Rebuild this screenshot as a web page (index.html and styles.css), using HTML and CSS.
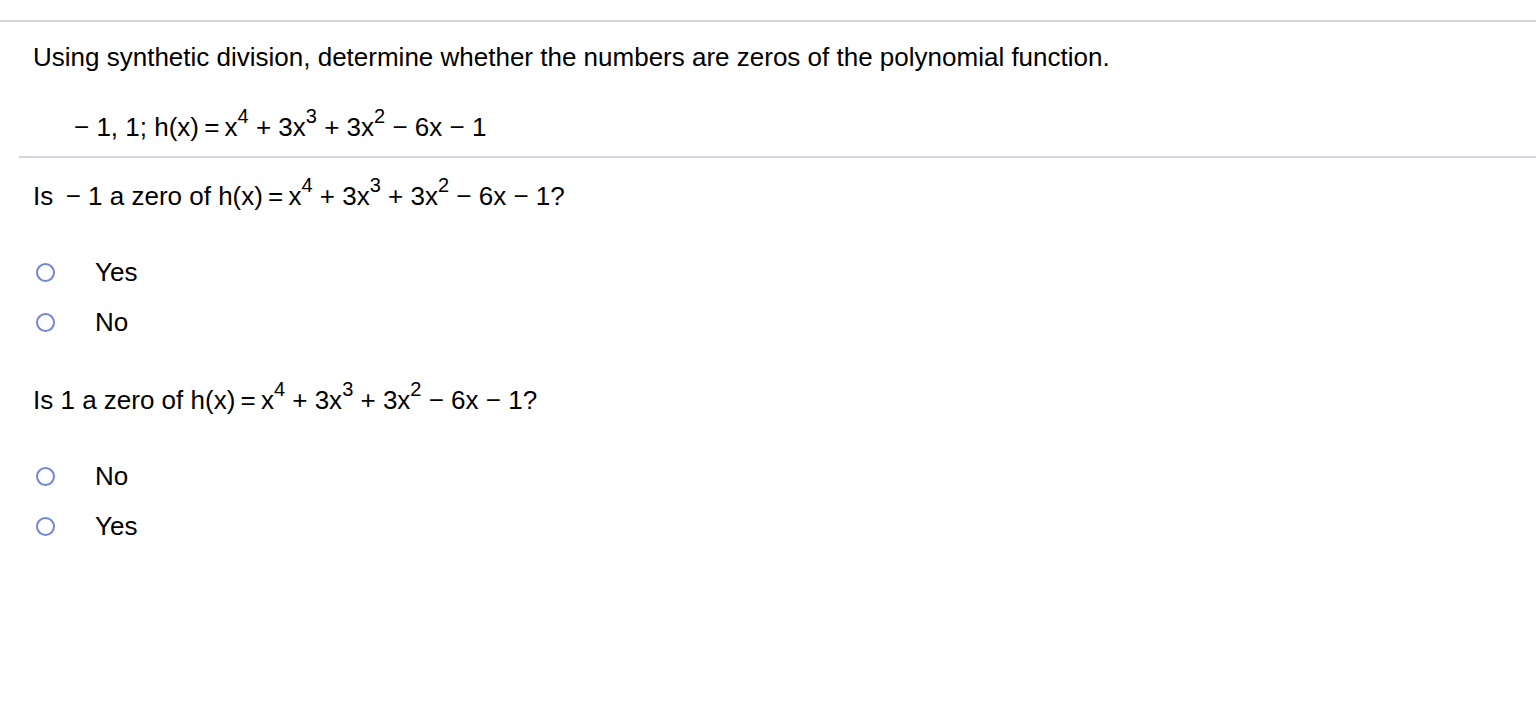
FILE: index.html
```html
<!DOCTYPE html>
<html>
<head>
<meta charset="utf-8">
<link rel="stylesheet" href="styles.css">
</head>
<body>
<div class="page">
  <div class="top-rule"></div>
  <section class="stem">
    <p class="prompt">Using synthetic division, determine whether the numbers are zeros of the polynomial function.</p>
    <p class="given">− 1, 1; h(x)&thinsp;=&thinsp;x<sup>4</sup> + 3x<sup>3</sup> + 3x<sup>2</sup> − 6x − 1</p>
  </section>
  <div class="mid-rule"></div>
  <section class="part">
    <p class="question">Is&nbsp;&thinsp;− 1 a zero of h(x)&thinsp;=&thinsp;x<sup>4</sup> + 3x<sup>3</sup> + 3x<sup>2</sup> − 6x − 1?</p>
    <ul class="choices">
      <li class="choice"><span class="radio"></span><span class="label">Yes</span></li>
      <li class="choice"><span class="radio"></span><span class="label">No</span></li>
    </ul>
  </section>
  <section class="part">
    <p class="question">Is 1 a zero of h(x)&thinsp;=&thinsp;x<sup>4</sup> + 3x<sup>3</sup> + 3x<sup>2</sup> − 6x − 1?</p>
    <ul class="choices">
      <li class="choice"><span class="radio"></span><span class="label">No</span></li>
      <li class="choice"><span class="radio"></span><span class="label">Yes</span></li>
    </ul>
  </section>
</div>
</body>
</html>
```

FILE: styles.css
```css
* { box-sizing: border-box; }
html, body { margin: 0; padding: 0; background: #fff; }
body {
  font-family: "Liberation Sans", Arial, Helvetica, sans-serif;
  color: #000;
  font-size: 26px;
}
.page { width: 1536px; }
.top-rule {
  height: 22px;
  border-bottom: 2px solid #d3d6de;
}
.stem { padding: 20px 0 0 33px; }
.prompt { margin: 0; line-height: 30px; }
.given { margin: 35px 0 0 41px; line-height: 40px; }
sup {
  font-size: 20px;
  line-height: 0;
  vertical-align: 13px;
}
.mid-rule {
  margin: 9px 0 0 19px;
  height: 2px;
  background: #d3d6de;
}
.part { padding: 0 0 0 33px; }
.part + .part { padding-top: 22px; }
.question { margin: 20px 0 0 0; line-height: 36px; }
.choices { list-style: none; margin: 40px 0 0 0; padding: 0; display: flex; flex-direction: column; gap: 14px; }
.choice { display: flex; align-items: center; height: 36px; }
.radio {
  width: 19px; height: 19px;
  border: 2px solid #7585d6;
  border-radius: 50%;
  margin-left: 3px;
  flex: none;
}
.label { margin-left: 40px; }
```
